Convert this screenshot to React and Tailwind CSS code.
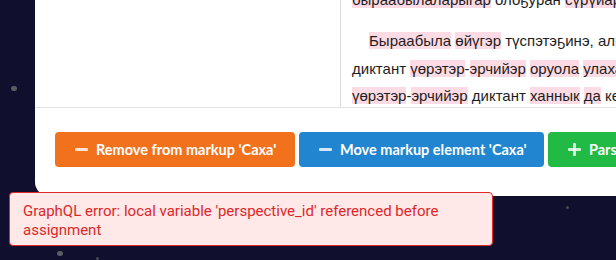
const H = ({ children }) => <span className="bg-[#fddbe4]">{children}</span>;

const Minus = () => (
  <span className="inline-block w-[13px] h-[3px] rounded-[1px] bg-white/80 shrink-0" />
);

const Plus = () => (
  <span className="relative inline-block w-[13px] h-[13px] shrink-0">
    <span className="absolute left-0 top-[5px] w-[13px] h-[3px] rounded-[1px] bg-white/80" />
    <span className="absolute left-[5px] top-0 w-[3px] h-[13px] rounded-[1px] bg-white/80" />
  </span>
);

export default function App() {
  return (
    <div className="relative w-[616px] h-[260px] overflow-hidden bg-[#100f2e]">
      <span className="absolute left-[11px] top-[86px] w-[6px] h-[5px] rounded-full bg-[#5a5a63]" />
      <span className="absolute left-[57px] top-[251px] w-[6px] h-[5px] rounded-full bg-[#5a5a63]" />
      <span className="absolute left-[566px] top-[206px] w-[3px] h-[3px] rounded-full bg-[#4a4a52]" />
      <span className="absolute left-[96px] top-[257px] w-[3px] h-[3px] rounded-full bg-[#4a4a52]" />

      <div className="ml-[35px] w-[620px] h-[196px] bg-white rounded-bl-[14px] flex flex-col">
        <div className="h-[108px] shrink-0 border-b border-[#e4e4e6] flex">
          <div className="w-[306px] shrink-0 border-r border-[#dcdcde]" />
          <div className="flex-1 overflow-hidden pl-[11px] font-['Liberation_Sans',sans-serif] text-[15px] leading-[27.5px] text-[#1e1e1e]">
            <div className="-mt-[14.5px] mb-[14px] whitespace-nowrap">
              <H>быраабылаларыгар</H> олоҕуран <H>сүрүйар</H> ...
            </div>
            <div className="whitespace-nowrap pl-[17px]">
              <H>Быраабыла</H> <H>өйүгэр</H> түспэтэҕинэ, алҕаһы оҥорор
            </div>
            <div className="whitespace-nowrap">
              диктант <H>үөрэтэр</H>-<H>эрчийэр</H> <H>оруола</H> <H>улахан</H>
            </div>
            <div className="whitespace-nowrap">
              <H>үөрэтэр</H>-<H>эрчийэр</H> диктант <H>ханнык</H> <H>да</H> көрүҥэ
            </div>
          </div>
        </div>
        <div className="flex gap-[4px] pl-[20px] pt-[24px] font-['Lato',sans-serif] font-bold text-[14.5px] text-white">
          <button className="h-[35px] w-[240px] shrink-0 rounded-[4px] bg-[#f2711c] flex items-center gap-[8px] pl-[20px] whitespace-nowrap">
            <Minus />
            <span>Remove from markup 'Саха'</span>
          </button>
          <button className="h-[35px] w-[245px] shrink-0 rounded-[4px] bg-[#2185d0] flex items-center gap-[8px] pl-[20px] whitespace-nowrap">
            <Minus />
            <span>Move markup element 'Саха'</span>
          </button>
          <button className="h-[35px] w-[200px] shrink-0 rounded-[4px] bg-[#21ba45] flex items-center gap-[8px] pl-[20px] whitespace-nowrap">
            <Plus />
            <span>Parse markup 'Саха'</span>
          </button>
        </div>
      </div>

      <div className="absolute left-[9px] top-[192px] w-[484px] h-[54px] rounded-[4px] border border-[#db2828] bg-[#ffe8e8] pl-[13px] pr-[10px] pt-[9px] font-['Roboto',sans-serif] text-[15px] leading-[19px] text-[#db2828]">
        GraphQL error: local variable 'perspective_id' referenced before assignment
      </div>
    </div>
  );
}
